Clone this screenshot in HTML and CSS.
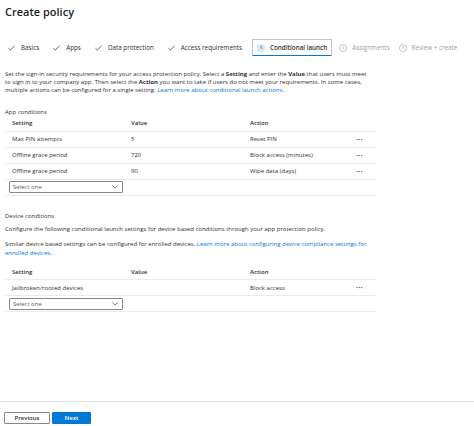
FILE: index.html
```html
<!DOCTYPE html>
<html lang="en">
<head>
    <meta charset="UTF-8">
    <meta name="viewport" content="width=device-width, initial-scale=1.0">
    <title>Create policy</title>
    <link rel="stylesheet" href="styles.css">
</head>
<body>
    <div id="main">
        <h1 class="title">Create policy</h1>

        <div class="steps">
            <div class="step done"><svg class="check" viewBox="0 0 8 6"><path d="M0.5 3.2 L2.7 5.3 L7.5 0.6" /></svg>Basics</div>
            <div class="step done"><svg class="check" viewBox="0 0 8 6"><path d="M0.5 3.2 L2.7 5.3 L7.5 0.6" /></svg>Apps</div>
            <div class="step done"><svg class="check" viewBox="0 0 8 6"><path d="M0.5 3.2 L2.7 5.3 L7.5 0.6" /></svg>Data protection</div>
            <div class="step done"><svg class="check" viewBox="0 0 8 6"><path d="M0.5 3.2 L2.7 5.3 L7.5 0.6" /></svg>Access requirements</div>
            <div class="step active"><span class="num">5</span>Conditional launch</div>
            <div class="step todo"><span class="num">6</span>Assignments</div>
            <div class="step todo"><span class="num">7</span>Review + create</div>
        </div>

        <p class="desc">Set the sign-in security requirements for your access protection policy. Select a <b>Setting</b> and enter the <b>Value</b> that users must meet to sign in to your company app. Then select the <b>Action</b> you want to take if users do not meet your requirements. In some cases, multiple actions can be configured for a single setting. <a href="#">Learn more about conditional launch actions.</a></p>

        <h2 class="section">App conditions</h2>
        <div class="grid">
            <div class="row head"><span>Setting</span><span>Value</span><span>Action</span><span></span></div>
            <div class="row"><span>Max PIN attempts</span><span>5</span><span>Reset PIN</span><span class="more">&middot;&middot;&middot;</span></div>
            <div class="row"><span>Offline grace period</span><span>720</span><span>Block access (minutes)</span><span class="more">&middot;&middot;&middot;</span></div>
            <div class="row"><span>Offline grace period</span><span>90</span><span>Wipe data (days)</span><span class="more">&middot;&middot;&middot;</span></div>
            <div class="row pick">
                <div class="select">Select one<svg class="chev" viewBox="0 0 8 5"><path d="M0.5 0.5 L4 4 L7.5 0.5" /></svg></div>
            </div>
        </div>

        <h2 class="section dev">Device conditions</h2>
        <p class="note">Configure the following conditional launch settings for device based conditions through your app protection policy.</p>
        <p class="note second">Similar device based settings can be configured for enrolled devices. <a href="#">Learn more about configuring device compliance settings for enrolled devices.</a></p>

        <div class="grid dev-grid">
            <div class="row head"><span>Setting</span><span>Value</span><span>Action</span><span></span></div>
            <div class="row"><span>Jailbroken/rooted devices</span><span></span><span>Block access</span><span class="more">&middot;&middot;&middot;</span></div>
            <div class="row pick">
                <div class="select">Select one<svg class="chev" viewBox="0 0 8 5"><path d="M0.5 0.5 L4 4 L7.5 0.5" /></svg></div>
            </div>
        </div>
    </div>

    <div id="footer">
        <button type="button" class="btn">Previous</button>
        <button type="button" class="btn primary">Next</button>
    </div>
</body>
</html>
```

FILE: styles.css
```css
html, body {
    margin: 0;
    padding: 0;
    background: #fff;
}
body {
    font-family: "Open Sans", "Noto Sans", sans-serif;
    font-size: 6px;
    color: #323130;
    height: 426px;
    display: flex;
    flex-direction: column;
    overflow: hidden;
}
#main {
    flex: 1;
    padding: 0 5px;
}

.title {
    margin: 3px 0 0 0;
    font-size: 11px;
    line-height: 17px;
    font-weight: 600;
    color: #201f1e;
}

.steps {
    display: flex;
    align-items: center;
    margin-top: 19px;
    height: 17px;
    white-space: nowrap;
    font-size: 6.3px;
}
.step {
    display: flex;
    align-items: center;
    margin-right: 11px;
}
.check {
    width: 7px;
    height: 6px;
    margin: 0 6px 0 3px;
    fill: none;
    stroke: #323130;
    stroke-width: 0.9;
}
.step.active {
    height: 17px;
    box-sizing: border-box;
    border: 1px solid #c8c6c4;
    border-bottom: 1.5px solid #0078d4;
    padding: 0 4px 0 4px;
    margin-left: -1px;
    margin-right: 7px;
    font-weight: 600;
}
.num {
    display: inline-flex;
    align-items: center;
    justify-content: center;
    width: 6px;
    height: 6px;
    border-radius: 50%;
    font-size: 4px;
    margin-right: 5px;
    border: 0.7px solid #c8c6c4;
    color: #a19f9d;
}
.active .num {
    background: #deecf9;
    border-color: #c7e0f4;
    color: #0078d4;
}
.step.todo {
    color: #a19f9d;
    margin-right: 9px;
}

.desc {
    margin: 14px 0 0 0;
    width: 365px;
    line-height: 8.2px;
}
a {
    color: #0078d4;
    text-decoration: none;
}

.section {
    margin: 13px 0 0 0;
    font-size: 6px;
    font-weight: 400;
    line-height: 8.2px;
}
.section.dev {
    margin-top: 16px;
}

.grid {
    width: 371px;
    margin-top: 0;
}
.row {
    display: grid;
    grid-template-columns: 119px 119px 1fr 20px;
    align-items: center;
    height: 16px;
    box-sizing: border-box;
    border-bottom: 1px solid #edebe9;
    padding-left: 7px;
}
.row.head {
    font-weight: 600;
    color: #323130;
}
.more {
    font-weight: 700;
    letter-spacing: 0.3px;
    font-size: 7px;
}
.row.pick {
    padding-left: 4px;
}
.select {
    width: 114px;
    height: 12px;
    box-sizing: border-box;
    border: 1px solid #8a8886;
    border-radius: 1px;
    display: flex;
    align-items: center;
    justify-content: space-between;
    padding: 0 4px 0 3px;
    color: #605e5c;
}
.chev {
    width: 6px;
    height: 4px;
    fill: none;
    stroke: #323130;
    stroke-width: 0.9;
}

.note {
    margin: 5px 0 0 0;
    line-height: 8.2px;
    width: 375px;
}
.note.second {
    margin-top: 7px;
    line-height: 9px;
}
.dev-grid {
    margin-top: 6px;
}

#footer {
    border-top: 1px solid #e1dfdd;
    height: 24px;
    padding: 10px 4px 0 4px;
    box-sizing: border-box;
    display: flex;
    align-items: flex-start;
    gap: 2px;
    margin-bottom: 1px;
}
.btn {
    height: 12px;
    width: 46px;
    padding: 0;
    font-family: "Open Sans", "Noto Sans", sans-serif;
    font-size: 6px;
    font-weight: 600;
    color: #323130;
    background: #fff;
    border: 1px solid #8a8886;
    border-radius: 1px;
}
.btn.primary {
    width: 39px;
    background: #0078d4;
    border-color: #0078d4;
    color: #fff;
}
```
